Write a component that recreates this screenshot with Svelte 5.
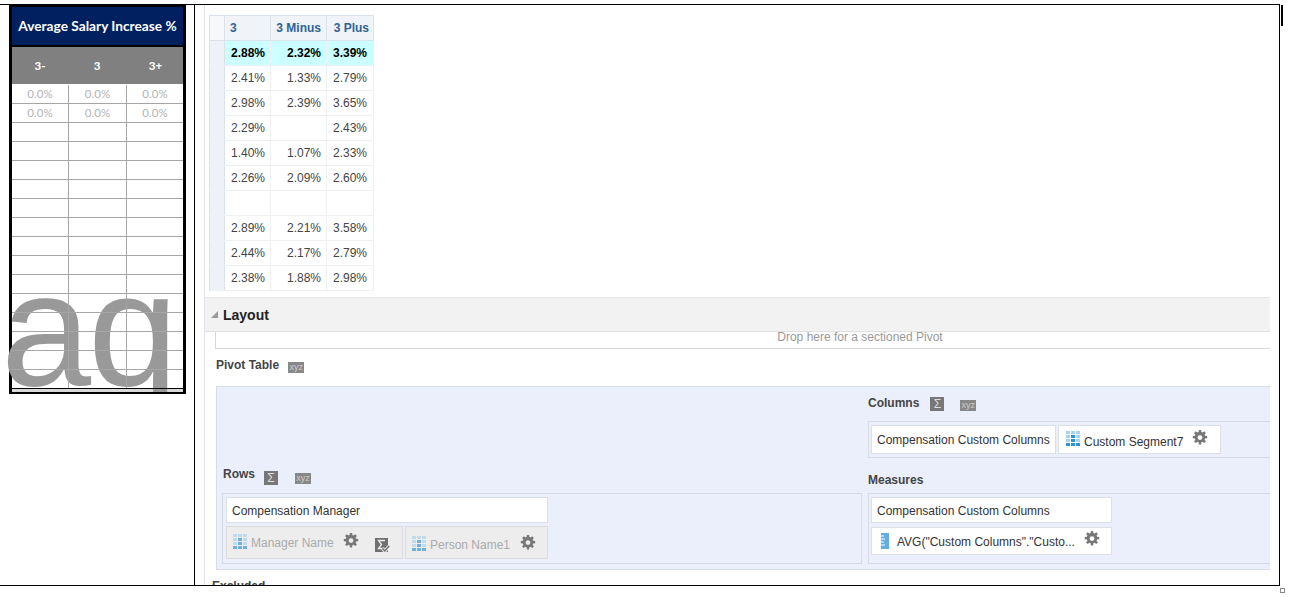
<script>
  const sheetRows = [
    ['0.0%', '0.0%', '0.0%'],
    ['0.0%', '0.0%', '0.0%'],
    ...Array.from({ length: 14 }, () => ['', '', ''])
  ];

  const pivotRows = [
    ['2.88%', '2.32%', '3.39%'],
    ['2.41%', '1.33%', '2.79%'],
    ['2.98%', '2.39%', '3.65%'],
    ['2.29%', '', '2.43%'],
    ['1.40%', '1.07%', '2.33%'],
    ['2.26%', '2.09%', '2.60%'],
    ['', '', ''],
    ['2.89%', '2.21%', '3.58%'],
    ['2.44%', '2.17%', '2.79%'],
    ['2.38%', '1.88%', '2.98%']
  ];

  const gear =
    'M6.9 0h2.2l.3 2.1 1.2.5L12.300 1.300 13.900 2.900l-1.300 1.700.5 1.200 2.100.3v2.200l-2.100.3-.5 1.200 1.300 1.700-1.600 1.600-1.700-1.300-1.200.5-.3 2.100H6.900l-.3-2.100-1.200-.5-1.700 1.300-1.600-1.600 1.300-1.700-.5-1.200L.8 8.300V6.100l2.100-.3.5-1.200L2.100 2.900 3.700 1.300l1.700 1.300 1.200-.5zM8 5.200a2.400 2.400 0 1 0 0 4.800 2.400 2.400 0 0 0 0-4.800z';

  const cells = Array.from({ length: 12 }, (_, i) => i);
</script>

{#snippet gearIcon()}
  <svg class="gear" viewBox="0 0 16 15.400"><path d={gear} fill="#777" fill-rule="evenodd" /></svg>
{/snippet}

{#snippet gridIcon()}
  <span class="grid-icon">
    {#each cells as i}
      <i class:dark={i === 4 || i === 7 || i === 9 || i === 10 || i === 11}></i>
    {/each}
  </span>
{/snippet}

{#snippet sigma()}
  <span class="tag sigma">Σ</span>
{/snippet}

{#snippet xyz()}
  <span class="tag xyz">xyz</span>
{/snippet}

<div class="page">
  <div class="frame">
    <aside class="left">
      <div class="sheet">
        <div class="sheet-title">Average Salary Increase %</div>
        <div class="sheet-head">
          <span>3-</span><span>3</span><span>3+</span>
        </div>
        <div class="big-text">aq</div>
        <div class="sheet-body">
          {#each sheetRows as row}
            <div class="sheet-row">
              {#each row as v}<span>{v}</span>{/each}
            </div>
          {/each}
        </div>
        <div class="sheet-foot"></div>
      </div>
    </aside>

    <main class="right">
      <div class="content">
        <table class="results">
          <thead>
            <tr><th class="corner"></th><th class="left-head">3</th><th>3 Minus</th><th>3 Plus</th></tr>
          </thead>
          <tbody>
            {#each pivotRows as row, r}
              <tr class:hl={r === 0}>
                <th class="corner"></th>
                {#each row as v}<td>{v}</td>{/each}
              </tr>
            {/each}
          </tbody>
        </table>

        <div class="section-bar">
          <span class="tri"></span>
          <span>Layout</span>
        </div>

        <div class="editor">
          <div class="drop">Drop here for a sectioned Pivot</div>

          <div class="pivot-label"><span>Pivot Table</span>{@render xyz()}</div>

          <div class="pivot">
            <div class="pivot-col">
              <div class="zone-label rows-label"><span>Rows</span>{@render sigma()}{@render xyz()}</div>
              <div class="zone rows-zone">
                <div class="pill head-pill">Compensation Manager</div>
                <div class="pill-row">
                  <div class="pill muted manager">
                    {@render gridIcon()}
                    <span class="name">Manager Name</span>
                    {@render gearIcon()}
                    <span class="check">
                      <svg viewBox="0 0 16 16" width="16" height="16">
                        <path d="M1 1h13v14H1z" fill="#6f6f6f" />
                        <path d="M11 3.500H4.500l3 4-3 4H10" fill="none" stroke="#ededed" stroke-width="1.300" />
                        <path d="M8.500 11.500l2.300 2.500 4.400-5" fill="none" stroke="#ededed" stroke-width="3.400" />
                        <path d="M8.500 11.500l2.300 2.500 4.400-5" fill="none" stroke="#6f6f6f" stroke-width="1.500" />
                      </svg>
                    </span>
                  </div>
                  <div class="pill muted person">
                    {@render gridIcon()}
                    <span class="name">Person Name1</span>
                    {@render gearIcon()}
                  </div>
                </div>
              </div>
            </div>

            <div class="pivot-col">
              <div class="zone-label cols-label"><span>Columns</span>{@render sigma()}{@render xyz()}</div>
              <div class="zone cols-zone">
                <div class="pill">Compensation Custom Columns</div>
                <div class="pill segment">
                  {@render gridIcon()}
                  <span class="name">Custom Segment7</span>
                  {@render gearIcon()}
                </div>
              </div>

              <div class="zone-label measures-label"><span>Measures</span></div>
              <div class="zone measures-zone">
                <div class="pill m-head">Compensation Custom Columns</div>
                <div class="pill m-item">
                  <svg class="ruler" viewBox="0 0 8 16" width="8" height="16">
                    <path d="M0 0h8v16H0z" fill="#62aee3" />
                    <path d="M0 3h3M0 6h4M0 9h3M0 12h4" stroke="#fff" stroke-width="1" />
                  </svg>
                  <span class="name">AVG("Custom Columns"."Custo...</span>
                  {@render gearIcon()}
                </div>
              </div>
            </div>
          </div>

          <div class="excluded">Excluded</div>
        </div>
      </div>
    </main>
  </div>
  <span class="tick"></span>
  <span class="handle"></span>
</div>

<style>
  :global(body) {
    margin: 0;
    background: #fff;
  }

  .page {
    position: relative;
    width: 1294px;
    height: 597px;
    overflow: hidden;
    padding-top: 4px;
    box-sizing: border-box;
    font-family: "Liberation Sans", Arial, sans-serif;
    color: #333;
  }

  .frame {
    display: flex;
    width: 1280px;
    height: 582px;
    box-sizing: border-box;
    border-top: 1px solid #000;
    border-bottom: 1px solid #000;
    border-right: 1px solid #000;
    overflow: hidden;
  }

  .left {
    width: 195px;
    flex: none;
    box-sizing: border-box;
    padding-left: 9px;
    border-right: 1px solid #000;
  }

  .sheet {
    position: relative;
    width: 177px;
    height: 389px;
    box-sizing: border-box;
    border: 3px solid #000;
    border-top-width: 2px;
    border-bottom-width: 2px;
    background: #fff;
  }

  .sheet-title {
    height: 38px;
    border-bottom: 2px solid #000;
    background: #002060;
    color: #fff;
    font: 700 13.700px/38px Lato, sans-serif;
    text-align: center;
    white-space: nowrap;
  }

  .sheet-head {
    display: grid;
    grid-template-columns: 56px 58px 57px;
    height: 37px;
    background: #808080;
    color: #fff;
    font: 700 11.500px/37px Lato, sans-serif;
    text-align: center;
  }

  .sheet-head span:last-child {
    padding-left: 2px;
  }

  .sheet-body {
    position: relative;
    padding-top: 1px;
  }

  .sheet-row {
    display: grid;
    grid-template-columns: 57px 58px 56px;
    height: 19px;
    box-sizing: border-box;
    border-bottom: 1px solid #a6a6a6;
    font: 11.500px/18px Lato, sans-serif;
    color: #b3b3b3;
    text-align: center;
  }

  .sheet-row:last-child {
    border-bottom-color: #000;
  }

  .sheet-row span {
    border-right: 1px solid #a6a6a6;
  }

  .sheet-row span:last-child {
    border-right: none;
  }

  .sheet-foot {
    height: 3px;
    background: #d9d9d9;
  }

  .big-text {
    position: absolute;
    left: -11px;
    top: 240px;
    height: 145px;
    padding-right: 12px;
    overflow: hidden;
    font: 162px/164px "Liberation Sans", Arial, sans-serif;
    color: #999;
    letter-spacing: -3px;
    white-space: nowrap;
  }

  .right {
    flex: 1;
    min-width: 0;
    padding-left: 9px;
    overflow: hidden;
  }

  .content {
    width: 1066px;
    height: 100%;
    box-sizing: border-box;
    border-left: 1px solid #dfe4ec;
    overflow: hidden;
  }

  .results {
    border-collapse: collapse;
    table-layout: fixed;
    width: 164px;
    margin: 10px 0 0 4px;
    font-size: 12px;
    color: #444;
    border: 1px solid #dbe1e9;
  }

  .results th,
  .results td {
    height: 25px;
    padding: 0 5px 0 0;
    box-sizing: border-box;
    border: 1px solid #eef0f3;
    text-align: right;
  }

  .results td:last-child {
    padding-right: 6px;
  }

  .results thead th {
    background: #f0f3f7;
    color: #2f6496;
    border-color: #dbe1e9;
    font-weight: 700;
  }

  .results thead th:last-child {
    padding-right: 4px;
  }

  .results thead th.left-head {
    text-align: left;
    padding-left: 5px;
  }

  .results th.corner {
    width: 15px;
    padding: 0;
    background: #eef1f8;
    border-color: #eef1f8 #dbe1e9;
  }

  .results thead th.corner {
    background: #f7f8fa;
    border-color: #dbe1e9;
  }

  .results thead th:nth-child(2) { width: 46px; }
  .results thead th:nth-child(3) { width: 56px; }
  .results thead th:nth-child(4) { width: 47px; }

  .hl td {
    background: #ccffff;
    color: #000;
    font-weight: 700;
  }

  .section-bar {
    display: flex;
    align-items: center;
    gap: 5px;
    height: 35px;
    margin-top: 6px;
    padding-left: 6px;
    box-sizing: border-box;
    background: #f2f2f2;
    border-top: 1px solid #e6e6e6;
    border-bottom: 1px solid #e0e0e0;
    font-size: 14px;
    font-weight: 700;
    color: #222;
  }

  .tri {
    width: 0;
    height: 0;
    border-left: 7px solid transparent;
    border-bottom: 7px solid #9a9a9a;
  }

  .editor {
    padding-left: 10px;
  }

  .drop {
    height: 17px;
    box-sizing: border-box;
    border-left: 1px solid #d8d8d8;
    border-bottom: 1px solid #d8d8d8;
    padding-left: 234px;
    font-size: 12px;
    line-height: 10px;
    color: #999;
    text-align: center;
  }

  .pivot-label {
    display: flex;
    align-items: center;
    gap: 9px;
    height: 18px;
    margin-top: 7px;
    padding-left: 1px;
    font-size: 12px;
    font-weight: 700;
    color: #444;
  }

  .pivot-label .xyz {
    margin-top: 4px;
  }

  .tag {
    display: inline-flex;
    align-items: center;
    justify-content: center;
    background: #777;
    color: #ddd;
    flex: none;
  }

  .xyz {
    width: 16px;
    height: 11px;
    font-size: 9px;
    line-height: 11px;
    font-weight: 400;
    background: #888;
    color: #ccc;
  }

  .sigma {
    width: 14px;
    height: 14px;
    font-size: 12px;
    font-weight: 400;
  }

  .pivot {
    display: grid;
    grid-template-columns: 646px 1fr;
    align-items: end;
    height: 184px;
    margin-top: 12px;
    margin-left: 1px;
    box-sizing: border-box;
    padding: 0 0 5px 5px;
    background: #eaeffb;
    border: 1px solid #d8dde6;
    border-right: none;
  }

  .zone-label {
    display: flex;
    align-items: center;
    height: 16px;
    font-size: 12px;
    font-weight: 700;
    color: #444;
  }

  .zone-label span:first-child {
    margin-top: -2px;
  }

  .rows-label {
    gap: 9px;
    padding-left: 1px;
  }

  .rows-label .tag {
    margin-top: 6px;
  }

  .rows-label .xyz {
    margin-left: 8px;
  }

  .cols-label {
    gap: 11px;
    margin-bottom: 9px;
  }

  .cols-label .xyz {
    margin-left: 5px;
    margin-top: 2px;
  }

  .zone {
    border: 1px solid #d5dae3;
    box-sizing: border-box;
  }

  .rows-zone {
    width: 640px;
    height: 71px;
    margin-top: 10px;
    padding: 3px 3px;
  }

  .pill {
    display: flex;
    align-items: center;
    box-sizing: border-box;
    background: #fff;
    border: 1px solid #dcdfe5;
    font-size: 12px;
    color: #333;
    padding-left: 5px;
    white-space: nowrap;
  }

  .head-pill {
    width: 322px;
    height: 26px;
    padding-top: 2px;
  }

  .pill-row {
    display: flex;
    gap: 2px;
    margin-top: 3px;
  }

  .muted {
    background: #ededed;
    border-color: #dcdcdc;
    color: #aaa;
    height: 33px;
    padding-left: 6px;
  }

  .muted .grid-icon {
    opacity: 0.65;
  }

  .manager { width: 177px; }

  .person {
    width: 143px;
    padding-top: 4px;
  }

  .person .gear {
    margin-left: 10px;
  }

  .name {
    margin-left: 4px;
  }

  .gear {
    width: 16px;
    height: 15.400px;
    flex: none;
    margin-left: 9px;
    margin-top: -4px;
  }

  .check {
    display: flex;
    margin-left: 15px;
    margin-top: 4px;
  }

  .grid-icon {
    display: grid;
    grid-template-columns: repeat(3, 4px);
    grid-auto-rows: 3px;
    gap: 1px;
    flex: none;
    margin-top: -3px;
  }

  .grid-icon i {
    background: #a7d3f1;
  }

  .grid-icon i.dark {
    background: #2f92d3;
  }

  .cols-zone {
    display: flex;
    gap: 2px;
    height: 37px;
    padding: 3px 2px;
    margin-right: -40px;
  }

  .cols-zone .pill:first-child {
    width: 185px;
    height: 29px;
  }

  .segment {
    width: 163px;
    height: 29px;
    padding-left: 7px;
  }

  .segment .name {
    margin-left: 4px;
    margin-top: 5px;
  }

  .segment .gear {
    margin-left: 9px;
  }

  .measures-label {
    margin-top: 15px;
    margin-bottom: 4px;
  }

  .measures-zone {
    height: 71px;
    padding: 3px 2px;
    margin-right: -40px;
  }

  .m-head {
    width: 241px;
    height: 26px;
    padding-top: 2px;
  }

  .m-item {
    width: 241px;
    height: 28px;
    margin-top: 4px;
    padding-left: 9px;
  }

  .m-item .name {
    margin-left: 8px;
    margin-top: 2px;
  }

  .ruler {
    flex: none;
  }

  .excluded {
    margin-top: 9px;
    margin-left: -3px;
    font-size: 12px;
    font-weight: 700;
    color: #444;
  }

  .tick {
    position: absolute;
    left: 1281px;
    top: 5px;
    width: 2px;
    height: 21px;
    background: #000;
  }

  .handle {
    position: absolute;
    left: 1280px;
    top: 588px;
    width: 5px;
    height: 5px;
    box-sizing: border-box;
    border: 1px solid #888;
  }
</style>
